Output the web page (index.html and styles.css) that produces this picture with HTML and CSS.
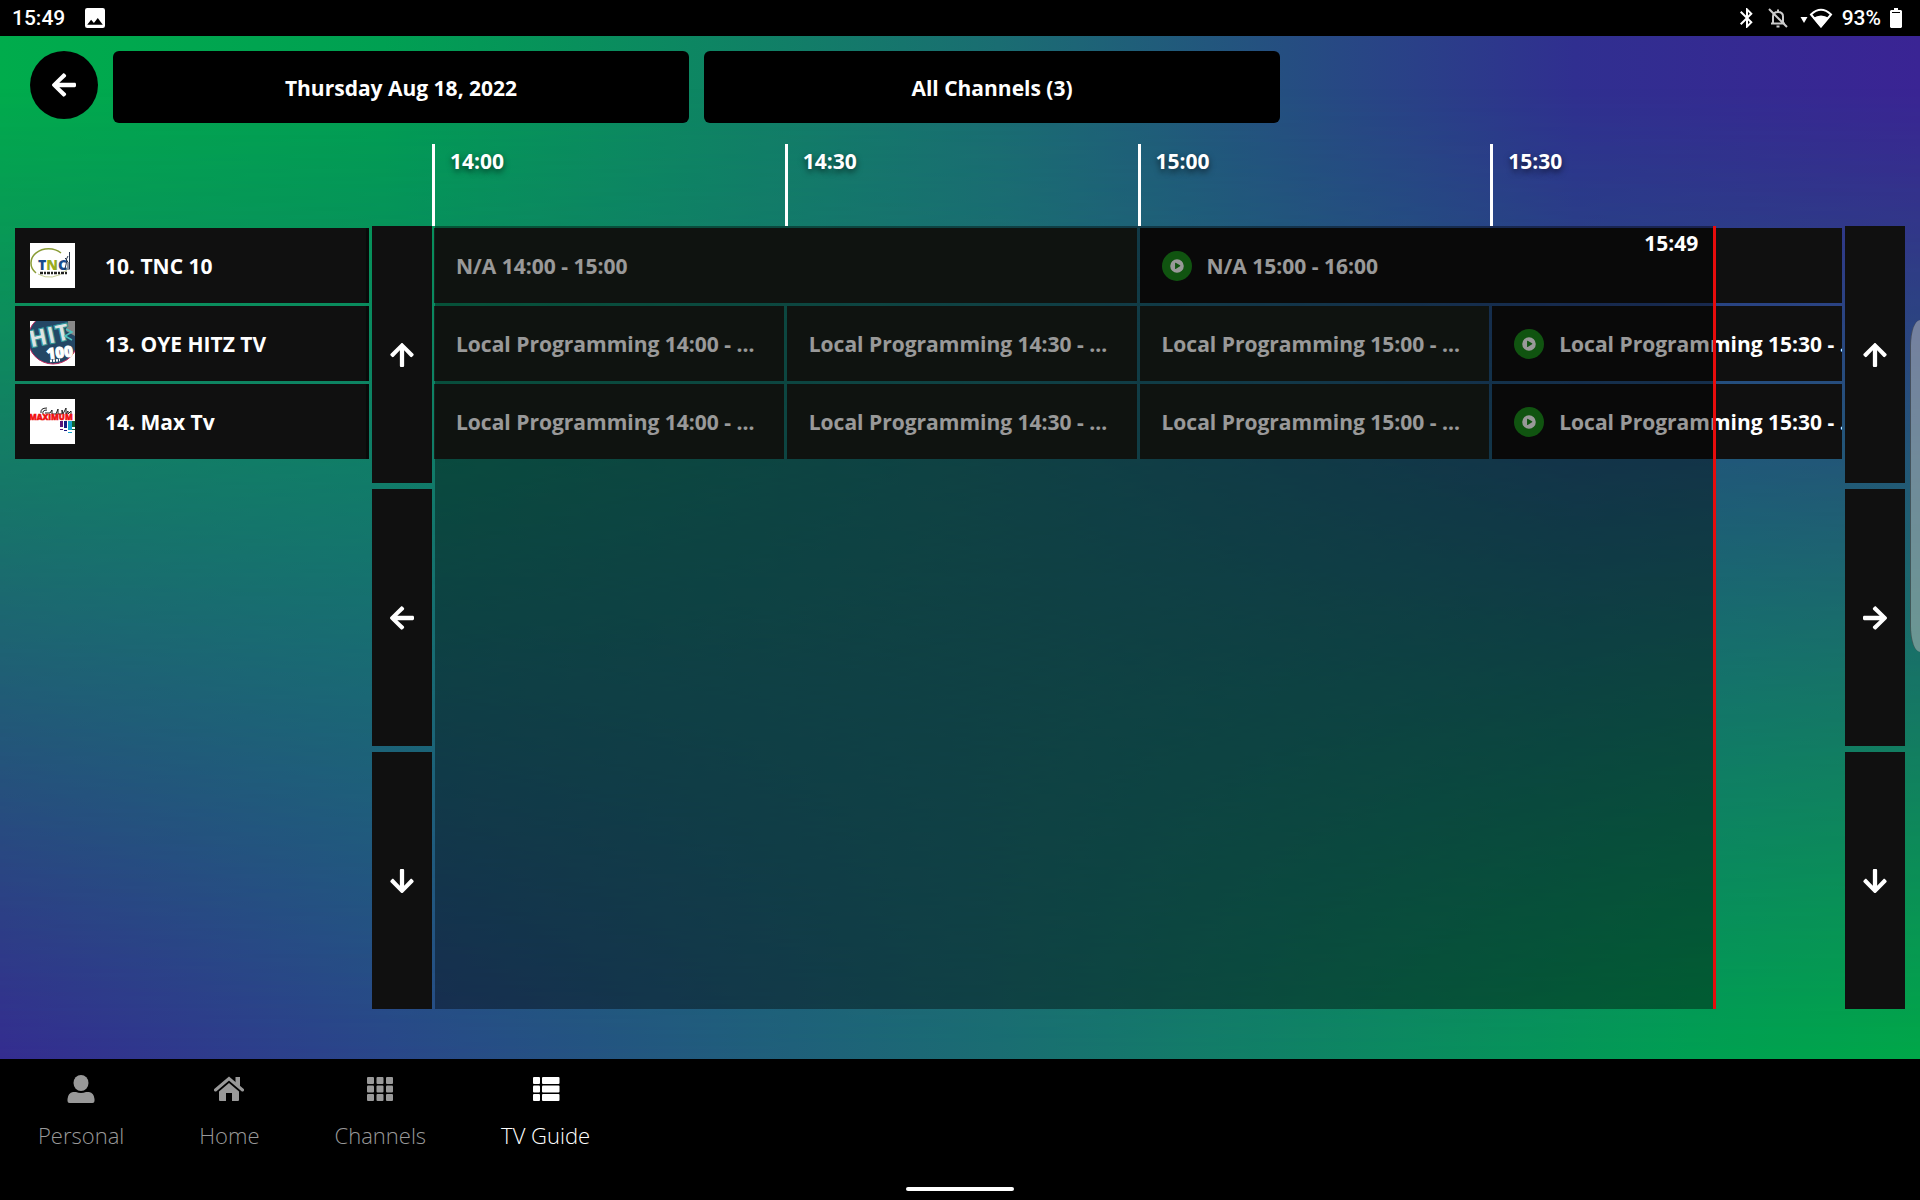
FILE: index.html
```html
<!DOCTYPE html>
<html lang="en">
<head>
<meta charset="utf-8">
<meta name="viewport" content="width=device-width, initial-scale=1">
<title>TV Guide</title>
<link rel="stylesheet" href="styles.css">
</head>
<body>
<svg class="defs" aria-hidden="true">
  <symbol id="arrow-left" viewBox="0 0 448 512"><path d="M257.5 445.1l-22.2 22.2c-9.4 9.4-24.6 9.4-33.9 0L7 273c-9.4-9.4-9.4-24.6 0-33.9L201.400 44.700c9.400-9.400 24.600-9.400 33.900 0l22.200 22.200c9.500 9.500 9.300 25-.4 34.300L136.600 216H424c13.300 0 24 10.700 24 24v32c0 13.300-10.700 24-24 24H136.600l120.500 114.800c9.800 9.300 10 24.800.4 34.300z"/></symbol>
  <symbol id="play" viewBox="0 0 512 512"><path fill-rule="evenodd" d="M256 8a248 248 0 1 0 0 496 248 248 0 1 0 0-496zM185 150q0-24 22-12l160 94q22 16 0 32l-160 100q-22 12-22-12z"/></symbol>
</svg>

<header class="status">
  <div class="status-group">
    <span>15:49</span>
    <svg class="status-photo" viewBox="0 0 18 18"><path fill-rule="evenodd" d="M2 0h14a2 2 0 0 1 2 2v14a2 2 0 0 1-2 2H2a2 2 0 0 1-2-2V2a2 2 0 0 1 2-2zm3.500 10.500L2 15h14l-4.500-6L8 13.500z"/></svg>
  </div>
  <div class="status-group status-right">
    <svg class="bluetooth" viewBox="5 2 13 20"><path d="M17.710 7.710L12 2h-1v7.590L6.410 5 5 6.410 10.590 12 5 17.590 6.410 19 11 14.410V22h1l5.710-5.710-4.300-4.290 4.300-4.290zM13 5.830l1.880 1.880L13 9.590V5.830zm1.880 10.460L13 18.170v-3.760l1.880 1.880z"/></svg>
    <svg class="muted" viewBox="0 0 20 20"><path d="M5 15V8.500Q5 4 10 4t5 4.500V15M3 15.500h14M10 4V1.500M8.500 18.500h3M1 1l18 18" fill="none" stroke="#ccc" stroke-width="2"/></svg>
    <svg class="wifi" viewBox="0 0 32 20"><path d="M0 9h7l-3.500 6z"/><path d="M20.500 18.500L10.500 6.500Q20.500-3 30.500 6.500z" fill="none" stroke="#fff" stroke-width="2"/><path d="M20.500 19.500l-8-9.500q8-5 16 0z"/></svg>
    <span>93%</span>
    <svg class="battery" viewBox="0 0 12 20"><path d="M4 0h4v2h3l1 1v16l-1 1H1l-1-1V3l1-1h3z"/><path d="M2 4.500h8" stroke="#000"/></svg>
  </div>
</header>

<main class="guide">
  <div class="toolbar">
    <button class="back" aria-label="Back"><svg class="arrow"><use href="#arrow-left"/></svg></button>
    <button class="filter">Thursday Aug 18, 2022</button>
    <button class="filter">All Channels (3)</button>
  </div>

  <div class="board">
    <div class="times">
      <span class="time">14:00</span><span class="time">14:30</span><span class="time">15:00</span><span class="time">15:30</span>
    </div>

    <div class="channels">
      <div class="channel">
        <svg class="logo" viewBox="0 0 45 45"><rect width="45" height="45" fill="#fff"/><path d="M6 30A16 13 0 0 1 31 10" fill="none" stroke="#8a9c35" stroke-width="1.500"/><path d="M8 31Q22 39 37 27" fill="none" stroke="#c6cf94"/><text x="8" y="27" class="mark" font-size="14" fill="#174b8c">T<tspan fill="#9aac20">N</tspan>C</text><path d="M35 15l2 2-2 9M38 13l-2 4 2 2v6M34 26h6M39.500 9v17" stroke="#25354f" fill="none"/><path d="M10 30h28" stroke="#222" stroke-width="2.500" stroke-dasharray="3 1 2 1"/></svg>
        <span>10. TNC 10</span>
      </div>
      <div class="channel">
        <svg class="logo" viewBox="0 0 45 45"><rect width="45" height="45" fill="#fff"/><circle cx="23" cy="18" r="25" fill="#244765" stroke="#c32860"/><path d="M38 0h7v15l-9-5z" fill="#888"/><g class="mark" fill="#dce4e4" stroke="#2d9698" stroke-width="1"><text x="0" y="25" font-size="24" transform="rotate(-12 10 22)">HIT</text><text x="17" y="38" font-size="15" transform="rotate(-7 20 36)" fill="#fff" stroke="#fff">100</text></g><path d="M36 8l6 3-7 4 7 4" fill="none" stroke="#4cc2be" stroke-width="1.500"/><path d="M20 40l10-1" stroke="#fff" stroke-width="2.500" stroke-dasharray="2 1"/></svg>
        <span>13. OYE HITZ TV</span>
      </div>
      <div class="channel">
        <svg class="logo" viewBox="0 0 45 45"><rect width="45" height="45" fill="#fff"/><path d="M17 9q-7 0-6 5M17 11q-5 0-4 4M15 14h5l2-3v4h4l2-5v5h4v-4l1 4 3-6v6l2-3v3l3-3v3" stroke="#222" fill="none"/><text x="-1" y="21" class="mark" font-size="8" fill="#f0100e" stroke="#f0100e" stroke-width=".5">MAXIMUM RA</text><path d="M30 22h3v6h-3zM30 30h3v1h-3z" fill="#5b1478"/><path d="M34 22h3v7h-3zM34 31h3v1h-3z" fill="#151c85"/><path d="M38 22h4v9h-4zM38 33h4v1h-4z" fill="#16a6cf"/><path d="M42 22h3v6h-3zM42 30h3v1h-3z" fill="#12642f"/></svg>
        <span>14. Max Tv</span>
      </div>
    </div>

    <div class="pager pager-start">
      <button aria-label="Scroll up"><svg class="arrow up"><use href="#arrow-left"/></svg></button>
      <button aria-label="Earlier"><svg class="arrow"><use href="#arrow-left"/></svg></button>
      <button aria-label="Scroll down"><svg class="arrow down"><use href="#arrow-left"/></svg></button>
    </div>

    <div class="programs">
      <div class="row">
        <div class="program hour past"><span class="title">N/A 14:00 - 15:00</span></div>
        <div class="program hour"><span class="live"><svg><use href="#play"/></svg></span><span class="title">N/A 15:00 - 16:00</span></div>
      </div>
      <div class="row">
        <div class="program past"><span class="title">Local Programming 14:00 - 14:30</span></div>
        <div class="program past"><span class="title">Local Programming 14:30 - 15:00</span></div>
        <div class="program past"><span class="title">Local Programming 15:00 - 15:30</span></div>
        <div class="program"><span class="live"><svg><use href="#play"/></svg></span><span class="title">Local Programming 15:30 - 16:00</span></div>
      </div>
      <div class="row">
        <div class="program past"><span class="title">Local Programming 14:00 - 14:30</span></div>
        <div class="program past"><span class="title">Local Programming 14:30 - 15:00</span></div>
        <div class="program past"><span class="title">Local Programming 15:00 - 15:30</span></div>
        <div class="program"><span class="live"><svg><use href="#play"/></svg></span><span class="title">Local Programming 15:30 - 16:00</span></div>
      </div>
      <div class="elapsed" style="width: 90.8%"><span>15:49</span></div>
    </div>

    <div class="pager pager-end">
      <button aria-label="Scroll up"><svg class="arrow up"><use href="#arrow-left"/></svg></button>
      <button aria-label="Later"><svg class="arrow right"><use href="#arrow-left"/></svg></button>
      <button aria-label="Scroll down"><svg class="arrow down"><use href="#arrow-left"/></svg></button>
    </div>
  </div>
  <div class="edge-handle"></div>
</main>

<nav class="tabs">
  <a class="tab" href="#personal"><svg viewBox="0 0 28 28"><ellipse cx="14" cy="8" rx="7.500" ry="8"/><path d="M6 17h3q5 2 10 0h3q5 1 5.500 7v2q0 2-2 2h-23q-2 0-2-2v-2Q1 18 6 17z"/></svg><span>Personal</span></a>
  <a class="tab" href="#home"><svg class="home" viewBox="0 0 30 28"><path d="M15 8l10 8.500V25q0 1-1 1h-6v-8h-6v8H6q-1 0-1-1v-8.500z"/><path d="M1.500 15L15 3.500 28.500 15" fill="none" stroke="#999" stroke-width="3" stroke-linecap="round"/><path d="M21.500 2H26v11l-4.500-4z"/></svg><span>Home</span></a>
  <a class="tab" href="#channels"><svg viewBox="0 0 28 28"><g id="cells"><rect x="1" y="2" width="7" height="7" rx="1"/><rect x="1" y="10.500" width="7" height="7" rx="1"/><rect x="1" y="19" width="7" height="7" rx="1"/></g><use href="#cells" x="9.500"/><use href="#cells" x="19"/></svg><span>Channels</span></a>
  <a class="tab active" href="#guide" aria-current="page"><svg viewBox="0 0 28 28"><use href="#cells"/><rect x="10" y="2" width="17.500" height="7" rx="1"/><rect x="10" y="10.500" width="17.500" height="7" rx="1"/><rect x="10" y="19" width="17.500" height="7" rx="1"/></svg><span>TV Guide</span></a>
  <div class="home-bar"></div>
</nav>
</body>
</html>
```
FILE: styles.css
```css
* { box-sizing: border-box; }

body {
  margin: 0;
  min-height: 100vh;
  display: flex;
  flex-direction: column;
  background: #000;
  color: #fff;
  font: 700 21px/30px "Open Sans", sans-serif;
}

button {
  border: 0;
  padding: 0;
  color: inherit;
  font: inherit;
  cursor: pointer;
}

svg { display: block; fill: currentColor; }
.defs { position: absolute; width: 0; height: 0; }

/* System status bar */
.status {
  display: flex;
  justify-content: space-between;
  height: 36px;
  padding: 0 18px 0 12px;
  font: 500 21px/36px Roboto, sans-serif;
}
.status-group { display: flex; align-items: center; gap: 20px; }
.status-right { gap: 9px; }
.status-photo { width: 20px; height: 20px; }
.bluetooth { width: 13px; height: 20px; margin-right: 6px; }
.muted { width: 20px; height: 20px; margin-right: 3px; }
.wifi { width: 33px; height: 20px; }
.battery { width: 12px; height: 20px; }

/* Guide: two crossing gradients give green and violet opposite corners */
.guide {
  position: relative;
  isolation: isolate;
  flex: 1;
  display: flex;
  flex-direction: column;
  gap: 21px;
  padding: 15px 15px 50px;
  background: linear-gradient(90deg, #00ac4c, #00a052 20%, #1a6d72 52%, #302f90 82%, #3a2494);
}
.guide::before {
  content: "";
  position: absolute;
  inset: 0;
  z-index: -1;
  background: linear-gradient(90deg, #342c90, #29468a 20%, #1a6d72 52%, #00a052 88%, #00a848);
  -webkit-mask-image: linear-gradient(transparent 5%, #000);
  mask-image: linear-gradient(transparent 5%, #000);
}

.toolbar { display: flex; gap: 15px; padding-left: 15px; }
.back {
  display: grid;
  place-items: center;
  width: 68px;
  height: 68px;
  border-radius: 50%;
  background: #000;
}
.filter {
  flex: 0 1 576px;
  height: 72px;
  padding-top: 2px;
  border-radius: 6px;
  background: #000;
}

.arrow { width: 24px; height: 28px; }
.up { transform: rotate(90deg); }
.right { transform: rotate(180deg); }
.down { transform: rotate(270deg); }

.board {
  flex: 1;
  display: grid;
  grid-template-columns: 354px 63px minmax(0, 1fr) 62px;
  grid-template-rows: 82px 1fr;
  grid-template-areas:
    ". . times ."
    "channels start programs end";
}

.times {
  grid-area: times;
  display: grid;
  grid-template-columns: repeat(4, 1fr);
}
.time {
  padding: 2px 15px;
  border-left: 3px solid #fff;
  text-shadow: 0 3px 6px rgba(0, 0, 0, .6);
}

.channels {
  grid-area: channels;
  display: flex;
  flex-direction: column;
  gap: 3px;
  padding-top: 2px;
}
.channel {
  display: flex;
  align-items: center;
  gap: 30px;
  height: 75px;
  padding-left: 15px;
  border-right: 3px solid #080a09;
  background: #101010;
}
.logo { width: 45px; height: 45px; overflow: hidden; }
.mark { font-family: "Open Sans", sans-serif; font-weight: 800; }

.pager {
  display: flex;
  flex-direction: column;
  gap: 6px;
  align-items: flex-end;
}
.pager-start { grid-area: start; }
.pager-end { grid-area: end; }
.pager button {
  flex: 1;
  display: grid;
  place-items: center;
  width: 60px;
  background: #101010;
}

.programs { grid-area: programs; position: relative; padding-top: 2px; }
.row {
  display: grid;
  grid-template-columns: repeat(4, minmax(0, 1fr));
  margin-bottom: 3px;
}
.program {
  display: flex;
  align-items: center;
  min-width: 0;
  height: 75px;
  margin: 0 1px 0 2px;
  padding: 0 22px;
  overflow: hidden;
  background: #101010;
}
.hour { grid-column: span 2; }
.past { background: #1a211c; }
.title {
  flex: none;
  width: 100%;
  overflow: hidden;
  text-overflow: ellipsis;
  white-space: nowrap;
}
.live {
  flex: none;
  display: grid;
  place-items: center;
  width: 30px;
  height: 30px;
  margin-right: 15px;
  border-radius: 50%;
  background: #1c8c1c;
}
.live svg { width: 14px; height: 14px; }

.elapsed {
  position: absolute;
  inset: 0 auto 0 3px;
  padding: 2px 15px;
  border-right: 3px solid #e80c0c;
  background: rgba(0, 0, 0, .4);
  background-clip: padding-box;
  text-align: right;
}

.edge-handle {
  position: absolute;
  top: 284px;
  right: 0;
  width: 10px;
  height: 332px;
  border-left: 1px solid rgba(0, 0, 0, .4);
  border-radius: 10px 0 0 10px / 26px;
  background: rgba(190, 190, 190, .5);
}

/* Bottom tabs */
.tabs {
  position: relative;
  display: flex;
  gap: 75px;
  height: 141px;
  padding: 16px 38px 0;
  font-size: 22px;
  font-weight: 300;
}
.tab {
  display: flex;
  flex-direction: column;
  align-items: center;
  gap: 17px;
  color: #999;
  text-decoration: none;
}
.tab svg { width: 28px; height: 28px; }
.tab .home { width: 30px; }
.active { color: #fff; }
.home-bar {
  position: absolute;
  bottom: 9px;
  left: 50%;
  width: 108px;
  height: 4px;
  margin-left: -54px;
  border-radius: 2px;
  background: #fff;
}
```
